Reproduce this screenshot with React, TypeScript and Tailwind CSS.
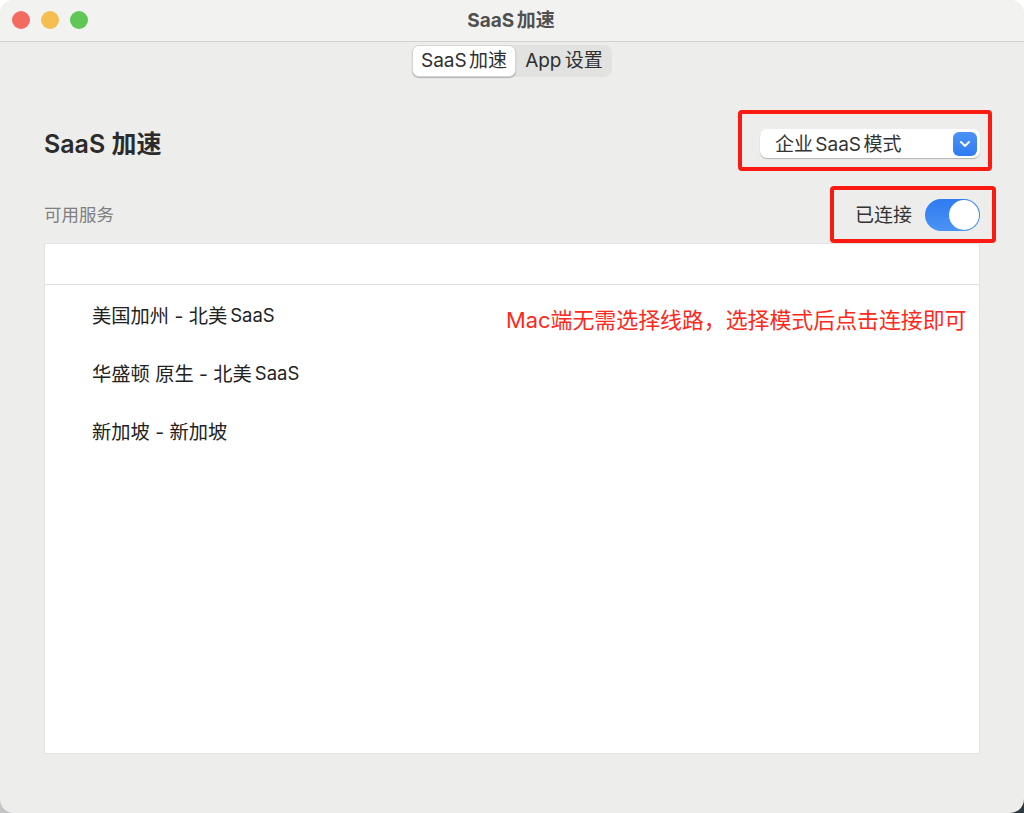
import React from 'react';

const services = [
  { name: '美国加州 - 北美', tag: 'SaaS' },
  { name: '华盛顿 原生 - 北美', tag: 'SaaS' },
  { name: '新加坡 - 新加坡', tag: '' },
];

const fontStack = "font-['Inter','Noto_Sans_CJK_SC',sans-serif]";

export default function App() {
  return (
    <div className={`relative w-[1024px] h-[813px] overflow-hidden bg-white ${fontStack}`}>
      {/* desktop showing through the rounded window corners */}
      <div className="absolute left-0 bottom-0 w-[20px] h-[20px] bg-[#c4c4c4]" />
      <div className="absolute right-0 bottom-0 w-[20px] h-[20px] bg-[#2c3a3f]" />

      <div className="relative flex flex-col h-full rounded-[14px] bg-[#ededec] overflow-hidden">
        <div className="relative flex items-center justify-center h-[42px] shrink-0 bg-[#f2f2f1] border-b border-[#d2d2d1]">
          <div className="absolute left-[12px] top-[11px] flex gap-[11px]">
            <span className="w-[18px] h-[18px] rounded-full bg-[#f26b5e]" />
            <span className="w-[18px] h-[18px] rounded-full bg-[#f6bd50]" />
            <span className="w-[18px] h-[18px] rounded-full bg-[#60c655]" />
          </div>
          <span className="pt-[2px] pr-[2px] text-[19px] font-bold text-[#505050] [word-spacing:-2px]">SaaS 加速</span>
        </div>

        <div className="flex justify-center mt-[3px]">
          <div className="flex h-[32px] w-[200px] rounded-[8px] bg-[#e2e2e1] text-[19px] text-[#2f2f2f]">
            <div className="flex items-center justify-center w-[104px] rounded-[7px] bg-white border border-[#d5d5d5] shadow-[0_1px_1px_rgba(0,0,0,0.25)] [word-spacing:-3px]">
              SaaS 加速
            </div>
            <div className="flex flex-1 items-center justify-center [word-spacing:-2px]">App 设置</div>
          </div>
        </div>

        <div className="flex items-center justify-between px-[44px] mt-[52px] h-[29px]">
          <h1 className="pt-[2px] text-[25px] font-semibold text-[#2b2b2b]">SaaS 加速</h1>
          <div className="flex items-center justify-between w-[220px] h-[29px] pl-[15px] pr-[3px] rounded-[7px] bg-white shadow-[0_1px_1px_rgba(0,0,0,0.25)] text-[19px] text-[#333333]">
            <span className="pt-[3px] [word-spacing:-3px]">企业 SaaS 模式</span>
            <span className="flex items-center justify-center w-[24px] h-[24px] rounded-[6px] bg-gradient-to-b from-[#4c93f5] to-[#2f7bf0]">
              <svg width="12" height="8" viewBox="0 0 12 8" fill="none">
                <path d="M2 2l4 4 4-4" stroke="white" strokeWidth="2" strokeLinecap="round" strokeLinejoin="round" />
              </svg>
            </span>
          </div>
        </div>

        <div className="flex items-center justify-between px-[44px] mt-[41px] h-[32px]">
          <span className="pt-[1px] text-[17.5px] text-[#808080]">可用服务</span>
          <div className="flex items-center gap-[13px]">
            <span className="pt-[2px] text-[19px] text-[#333333]">已连接</span>
            <div className="flex justify-end items-center w-[55px] h-[32px] p-[1px] rounded-full bg-gradient-to-b from-[#2f7bf0] to-[#4c93f5]">
              <span className="w-[30px] h-[30px] rounded-full bg-white" />
            </div>
          </div>
        </div>

        <div className="flex flex-col h-[511px] mt-[12px] mx-[44px] bg-white border border-[#e3e3e3]">
          <div className="h-[41px] shrink-0 border-b border-[#dedede]" />
          <ul className="pt-[2px] pl-[47px] text-[19.25px] text-[#222222]">
            {services.map((s) => (
              <li key={s.name} className="flex items-center h-[58.2px]">
                <span>{s.name}</span>
                {s.tag && <span className="ml-[3px] text-[18.5px]">{s.tag}</span>}
              </li>
            ))}
          </ul>
        </div>
      </div>

      {/* annotations on top of the screenshot */}
      <div className="absolute left-[738px] top-[110px] w-[254px] h-[61px] rounded-[4px] border-[4px] border-[#fb1a12]" />
      <div className="absolute left-[830px] top-[186px] w-[166px] h-[57px] rounded-[4px] border-[4px] border-[#fb1a12]" />
      <div className="absolute left-[506px] top-[305px] text-[21.9px] leading-[30px] text-[#fb2a20] whitespace-nowrap">
        Mac端无需选择线路，选择模式后点击连接即可
      </div>
    </div>
  );
}
